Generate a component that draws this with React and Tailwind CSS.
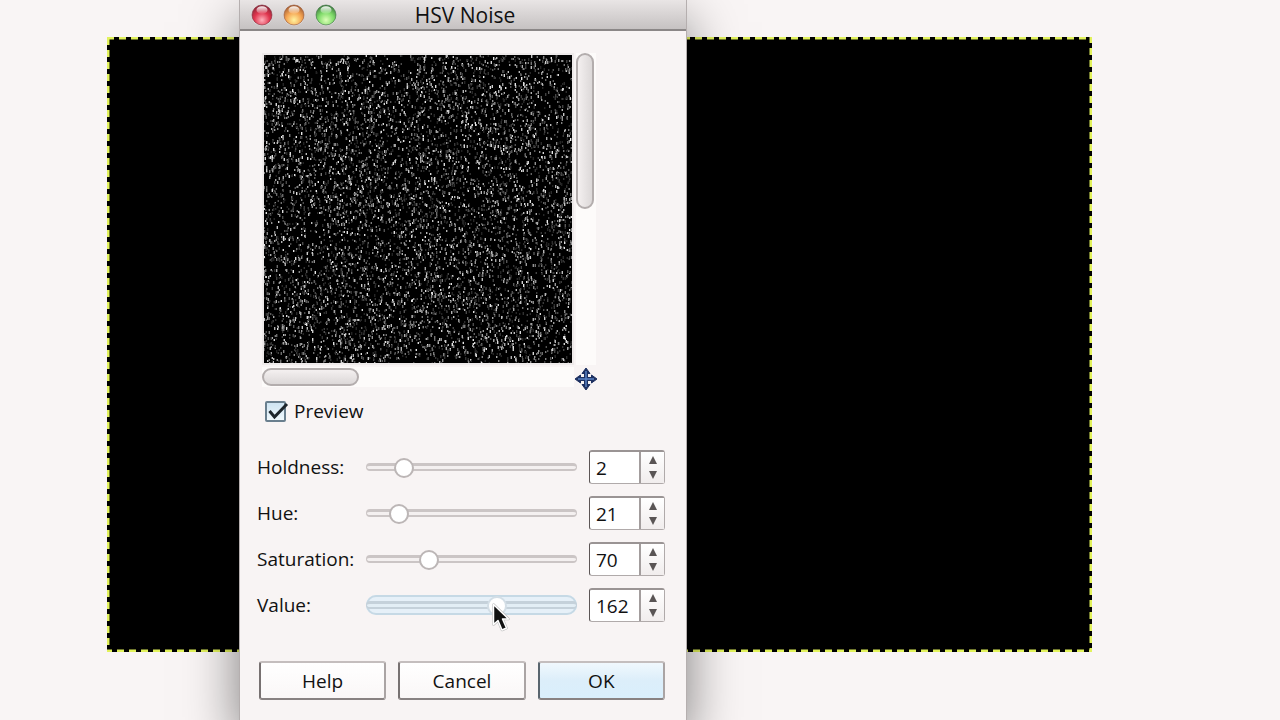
import React, { useState, useEffect, useRef } from 'react';

const PREVIEW_SIZE = 308;

const FIELDS = [
  { id: 'holdness', label: 'Holdness:', min: 1, max: 8, initial: 2 },
  { id: 'hue', label: 'Hue:', min: 0, max: 180, initial: 21 },
  { id: 'saturation', label: 'Saturation:', min: 0, max: 255, initial: 70 },
  { id: 'value', label: 'Value:', min: 0, max: 255, initial: 162 },
];

const LIGHTS = [
  { id: 'close', label: 'Close', dark: '#7d2434', mid: '#e0354e', glow: '#ffb0bb' },
  { id: 'minimize', label: 'Minimize', dark: '#94502e', mid: '#f5a553', glow: '#fff3a0' },
  { id: 'zoom', label: 'Zoom', dark: '#356b3a', mid: '#7fdb69', glow: '#dcffb8' },
];

// Small seeded generator so the preview is the same on every render
function createRandom(seed) {
  let state = seed;
  return () => {
    state = (state + 0x6d2b79f5) | 0;
    let t = Math.imul(state ^ (state >>> 15), 1 | state);
    t = (t + Math.imul(t ^ (t >>> 7), 61 | t)) ^ t;
    return ((t ^ (t >>> 14)) >>> 0) / 4294967296;
  };
}

function NoisePreview() {
  const canvasRef = useRef(null);

  useEffect(() => {
    const ctx = canvasRef.current.getContext('2d');
    const random = createRandom(162);
    ctx.fillStyle = '#000';
    ctx.fillRect(0, 0, PREVIEW_SIZE, PREVIEW_SIZE);
    for (let i = 0; i < 7600; i++) {
      const x = Math.floor(random() * PREVIEW_SIZE);
      const y = Math.floor(random() * PREVIEW_SIZE);
      const level = Math.floor(35 + Math.pow(random(), 2) * 200);
      const height = random() > 0.6 ? 3 : 2;
      ctx.fillStyle = `rgb(${level}, ${level}, ${level})`;
      ctx.fillRect(x, y, 1, height);
      ctx.fillStyle = `rgba(${level}, ${level}, ${level}, 0.4)`;
      ctx.fillRect(x + (random() > 0.5 ? 1 : -1), y, 1, height);
    }
  }, []);

  return (
    <canvas
      ref={canvasRef}
      width={PREVIEW_SIZE}
      height={PREVIEW_SIZE}
      aria-label="Noise preview"
      className="block"
    />
  );
}

function WindowLight({ light }) {
  return (
    <button type="button" aria-label={light.label} className="size-[22px]">
      <svg viewBox="0 0 22 22" className="block size-full">
        <defs>
          <radialGradient id={`body-${light.id}`} cx="50%" cy="75%" r="78%">
            <stop offset="0%" stopColor={light.glow} />
            <stop offset="50%" stopColor={light.mid} />
            <stop offset="100%" stopColor={light.dark} />
          </radialGradient>
          <linearGradient id={`shine-${light.id}`} x1="0" y1="0" x2="0" y2="1">
            <stop offset="0%" stopColor="#fff" stopOpacity="0.95" />
            <stop offset="100%" stopColor="#fff" stopOpacity="0.1" />
          </linearGradient>
        </defs>
        <circle cx="11" cy="11.5" r="10.5" fill="#fff" opacity="0.4" />
        <circle cx="11" cy="11" r="10" fill={`url(#body-${light.id})`} stroke={light.dark} strokeOpacity="0.6" />
        <ellipse cx="11" cy="6" rx="5.5" ry="3.8" fill={`url(#shine-${light.id})`} />
      </svg>
    </button>
  );
}

function MoveIcon() {
  return (
    <svg viewBox="0 0 24 24" className="block size-6">
      <path d="M12 5v14M5 12h14" fill="none" stroke="#1d3060" strokeWidth="4" />
      <path d="M12 1l4 5.500H8zM12 23l4-5.500H8zM1 12l5.500-4v8zM23 12l-5.500-4v8z" fill="#1d3060" stroke="#1d3060" strokeLinejoin="round" />
      <path d="M12 4v16M4 12h16" fill="none" stroke="#5b82c4" strokeWidth="1.5" />
    </svg>
  );
}

function SpinBox({ field, value, onChange }) {
  const step = (amount) => onChange(Math.min(field.max, Math.max(field.min, value + amount)));

  return (
    <div className="flex h-[34px] w-[76px] rounded-[3px] border border-[#b0aaaa] border-t-2 border-t-[#9a9494] border-l-[#5c5656] bg-white">
      <input
        type="text"
        inputMode="numeric"
        aria-label={`${field.label} amount`}
        value={value}
        onChange={(e) => onChange(Number(e.target.value) || field.min)}
        className="w-[51px] border-r-2 border-[#a39d9d] bg-transparent pl-1.5 outline-none"
      />
      <div className="flex flex-1 flex-col bg-gradient-to-b from-white to-[#f1eded]">
        <button type="button" aria-label={`Increase ${field.id}`} onClick={() => step(1)} className="flex flex-1 items-center justify-center">
          <svg viewBox="0 0 8 8" className="size-2" fill="#5a5555"><path d="M4 0l4 8H0z" /></svg>
        </button>
        <button type="button" aria-label={`Decrease ${field.id}`} onClick={() => step(-1)} className="flex flex-1 items-center justify-center">
          <svg viewBox="0 0 8 8" className="size-2" fill="#5a5555"><path d="M4 8l4-8H0z" /></svg>
        </button>
      </div>
    </div>
  );
}

function SliderRow({ field, value, onChange, active }) {
  return (
    <div className="flex h-[34px] items-center">
      <label htmlFor={field.id} className="w-[109px]">{field.label}</label>
      <div className="relative mr-3 flex flex-1">
        <input
          id={field.id}
          type="range"
          min={field.min}
          max={field.max}
          value={value}
          onChange={(e) => onChange(Number(e.target.value))}
          className={`h-5 w-full min-w-0 appearance-none rounded-full outline-none [&::-webkit-slider-runnable-track]:h-2 [&::-webkit-slider-runnable-track]:rounded-full [&::-webkit-slider-runnable-track]:border-t-3 [&::-webkit-slider-runnable-track]:border-b-2 [&::-webkit-slider-runnable-track]:border-x [&::-webkit-slider-thumb]:-mt-2 [&::-webkit-slider-thumb]:size-5 [&::-webkit-slider-thumb]:appearance-none [&::-webkit-slider-thumb]:rounded-full [&::-webkit-slider-thumb]:border-2 [&::-webkit-slider-thumb]:bg-white ${
            active
              ? 'bg-[#e6f0f8] ring-2 ring-inset ring-[#c6d9e5] [&::-webkit-slider-runnable-track]:border-[#c5d1da] [&::-webkit-slider-runnable-track]:bg-[#e3eef5] [&::-webkit-slider-thumb]:border-[#d3dee6]'
              : 'bg-transparent [&::-webkit-slider-runnable-track]:border-[#cbc5c5] [&::-webkit-slider-runnable-track]:bg-[#f4f0f0] [&::-webkit-slider-thumb]:border-[#bcb6b6]'
          }`}
        />
        {active && (
          <svg viewBox="0 0 18 29" className="pointer-events-none absolute top-2 left-[126px] h-[29px] w-[18px]">
            <path d="M1.5 1.5v20l4.5-4 4 9.5 4.5-2-4-9h6z" fill="#111" stroke="#bbb" strokeWidth="2.5" strokeLinejoin="round" />
            <path d="M1.5 1.5v20l4.5-4 4 9.5 4.500-2-4-9h6z" fill="#111" stroke="#fff" strokeWidth="1.5" strokeLinejoin="round" />
          </svg>
        )}
      </div>
      <SpinBox field={field} value={value} onChange={onChange} />
    </div>
  );
}

export default function App() {
  const [preview, setPreview] = useState(true);
  const [values, setValues] = useState(() => Object.fromEntries(FIELDS.map((f) => [f.id, f.initial])));

  const setValue = (id, value) => setValues((prev) => ({ ...prev, [id]: value }));

  const buttonClass = 'h-[39px] rounded-[3px] border-2 border-t-[#c4bebe] border-r-[#aaa4a4] border-b-[#888282]';

  return (
    <main className="relative min-h-screen overflow-hidden bg-[#f9f5f5] pt-[37px] pr-[188px] pb-[68px] pl-[107px] font-['Open_Sans','Noto_Sans',sans-serif] text-[19px] leading-6 text-[#111]">
      {/* Image canvas with its selection outline */}
      <div className="h-[615px] bg-black">
        <svg className="block size-full" aria-hidden="true">
          <rect width="100%" height="100%" fill="none" stroke="#e2f25c" strokeWidth="5" strokeDasharray="7 5" />
        </svg>
      </div>

      {/* Filter dialog */}
      <section
        aria-labelledby="dialog-title"
        className="absolute top-0 left-[239px] min-h-full w-[448px] border-x border-[#b5afaf] bg-[#f8f4f4] shadow-[0_22px_50px_rgba(0,0,0,0.5)]"
      >
        <header className="grid h-[31px] grid-cols-[1fr_auto_1fr] items-center border-b-2 border-[#8b8787] bg-gradient-to-b from-[#e9e5e5] to-[#c6c2c2] pr-[3px] pl-[11px]">
          <div className="-mr-2 flex gap-2.5">
            {LIGHTS.map((light) => (
              <WindowLight key={light.id} light={light} />
            ))}
          </div>
          <h1 id="dialog-title" className="pr-1 text-[21px]">HSV Noise</h1>
        </header>

        <div className="pt-[22px] pr-[21px] pl-[17px]">
          {/* Preview with scrollbars */}
          <div className="ml-[5px] grid w-fit grid-cols-[312px_24px] grid-rows-[314px_24px]">
            <div className="size-[312px] border-2 border-[#eeeaea] bg-white">
              <NoisePreview />
            </div>
            <div role="scrollbar" aria-label="Vertical" aria-orientation="vertical" aria-valuenow={0} className="ml-0.5 h-[312px] w-5 bg-[#fdfbfa]">
              <div className="h-[156px] w-[18px] rounded-full border-2 border-[#b3adad] bg-gradient-to-r from-[#f4f0f0] to-[#dcd8d8]" />
            </div>
            <div role="scrollbar" aria-label="Horizontal" aria-orientation="horizontal" aria-valuenow={0} className="h-5 bg-[#fdfbfa] pt-px">
              <div className="h-[18px] w-[97px] rounded-full border-2 border-[#b3adad] bg-gradient-to-b from-[#f4f0f0] to-[#dcd8d8]" />
            </div>
            <button type="button" aria-label="Move preview">
              <MoveIcon />
            </button>
          </div>

          <label className="mt-2 ml-2 flex w-fit items-center gap-2">
            <span className="relative block size-[21px]">
              <input
                type="checkbox"
                checked={preview}
                onChange={(e) => setPreview(e.target.checked)}
                className="block size-[21px] appearance-none rounded-[2px] border-2 border-[#6a7f8e] bg-gradient-to-b from-[#cfe4f2] to-[#f0f8fc]"
              />
              {preview && (
                <svg viewBox="0 0 24 21" className="pointer-events-none absolute top-0 left-0 h-[21px] w-6">
                  <path d="M4.500 10l5 6L22 3" fill="none" stroke="#1d252b" strokeWidth="3" />
                </svg>
              )}
            </span>
            Preview
          </label>

          {/* Noise settings */}
          <div className="mt-[27px] flex flex-col gap-3">
            {FIELDS.map((field) => (
              <SliderRow
                key={field.id}
                field={field}
                value={values[field.id]}
                onChange={(value) => setValue(field.id, value)}
                active={field.id === 'value'}
              />
            ))}
          </div>

          <footer className="mt-[39px] ml-0.5 grid grid-cols-3 gap-3">
            <button type="button" className={`${buttonClass} border-l-[#777171] bg-gradient-to-b from-white to-[#faf7f7]`}>Help</button>
            <button type="button" className={`${buttonClass} border-l-[#777171] bg-gradient-to-b from-white to-[#faf7f7]`}>Cancel</button>
            <button type="button" className={`${buttonClass} border-l-[#59656e] bg-gradient-to-b from-[#f0f8fd] via-[#dceefa] to-[#d9effc]`}>OK</button>
          </footer>
        </div>
      </section>
    </main>
  );
}
